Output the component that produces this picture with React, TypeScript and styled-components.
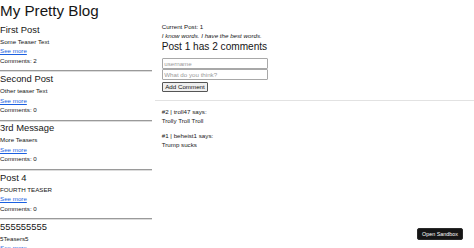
import React from "react";
import styled, { createGlobalStyle } from "styled-components";

const GlobalStyle = createGlobalStyle`
  html, body {
    margin: 0;
    padding: 0;
    background: #ffffff;
  }
  body {
    font-family: "Liberation Sans", Arial, Helvetica, sans-serif;
    color: #161616;
    font-size: 6.2px;
    overflow: hidden;
  }
  * { box-sizing: border-box; }
`;

const Page = styled.div`
  display: grid;
  grid-template-columns: 152px 1fr;
  column-gap: 3px;
  width: 474px;
  height: 248px;
  overflow: hidden;
`;

const LeftColumn = styled.div`
  display: flex;
  flex-direction: column;
`;

const BlogTitle = styled.h1`
  margin: 2.2px 0 4.6px 0;
  font-size: 15.2px;
  line-height: 17px;
  font-weight: 400;
  color: #161616;
`;

const PostCard = styled.article`
  display: flex;
  flex-direction: column;
`;

const PostTitle = styled.h2`
  margin: 0 0 2px 0;
  font-size: 9.4px;
  line-height: 11px;
  font-weight: 400;
  color: #161616;
`;

const Line = styled.div`
  line-height: 9.4px;
  font-size: 6.2px;
`;

const MoreLink = styled.a`
  line-height: 9.4px;
  font-size: 6.2px;
  color: #1a5fe0;
  text-decoration: underline;
  cursor: pointer;
`;

const Divider = styled.hr`
  margin: 5.3px 0 0.8px 0;
  height: 0;
  border: none;
  border-top: 1px solid #9a9a9a;
  border-bottom: 1px solid #dcdcdc;
`;

const RightColumn = styled.div`
  display: flex;
  flex-direction: column;
`;

const FormSection = styled.section`
  display: flex;
  flex-direction: column;
  align-items: flex-start;
  padding: 21.5px 0 8px 6.7px;
  border-bottom: 1px solid #e2e2e2;
`;

const InfoLine = styled.div`
  line-height: 9.5px;
`;

const Quote = styled.div`
  margin-top: 0.3px;
  line-height: 9.5px;
  font-style: italic;
`;

const CommentsHeading = styled.h2`
  margin: 0 0 5.2px 0;
  font-size: 10.1px;
  line-height: 11.6px;
  font-weight: 400;
  color: #161616;
`;

const TextInput = styled.input`
  width: 106.5px;
  height: 11px;
  margin: 0;
  padding: 0 1.5px;
  font-family: "Liberation Sans", Arial, sans-serif;
  font-size: 6.2px;
  color: #222;
  border: 1px solid #a8a8a8;
  border-radius: 1px;
  background: #fff;
  outline: none;
  &::placeholder {
    color: #9a9a9a;
  }
`;

const SubmitButton = styled.button`
  margin-top: 2px;
  height: 10px;
  padding: 0 2.5px;
  font-family: "Liberation Sans", Arial, sans-serif;
  font-size: 6.2px;
  line-height: 8px;
  color: #111;
  background: #efefef;
  border: 1px solid #555;
  border-radius: 1px;
`;

const CommentList = styled.div`
  display: flex;
  flex-direction: column;
  gap: 5.6px;
  padding: 6.2px 0 0 6.7px;
`;

const Comment = styled.div`
  display: flex;
  flex-direction: column;
  line-height: 9.3px;
`;

const SandboxButton = styled.button`
  position: fixed;
  right: 11px;
  bottom: 8px;
  height: 12px;
  padding: 0 4px;
  font-family: "Liberation Sans", Arial, sans-serif;
  font-size: 5.4px;
  color: #ffffff;
  background: #151515;
  border: 1px solid #2a2a2a;
  border-radius: 2px;
`;

const posts = [
  { title: "First Post", teaser: "Some Teaser Text", comments: 2 },
  { title: "Second Post", teaser: "Other teaser Text", comments: 0 },
  { title: "3rd Message", teaser: "More Teasers", comments: 0 },
  { title: "Post 4", teaser: "FOURTH TEASER", comments: 0 },
  { title: "555555555", teaser: "5Teasers5", comments: 0 },
];

const comments = [
  { id: 2, user: "troll47", text: "Trolly Troll Troll" },
  { id: 1, user: "beheist1", text: "Trump sucks" },
];

export default function App() {
  return (
    <>
      <GlobalStyle />
      <Page>
        <LeftColumn>
          <BlogTitle>My Pretty Blog</BlogTitle>
          {posts.map((p, i) => (
            <PostCard key={i}>
              <PostTitle>{p.title}</PostTitle>
              <Line>{p.teaser}</Line>
              <MoreLink>See more</MoreLink>
              <Line>Comments: {p.comments}</Line>
              <Divider />
            </PostCard>
          ))}
        </LeftColumn>
        <RightColumn>
          <FormSection>
            <InfoLine>Current Post: 1</InfoLine>
            <Quote>I know words. I have the best words.</Quote>
            <CommentsHeading>Post 1 has 2 comments</CommentsHeading>
            <TextInput placeholder="username" />
            <TextInput placeholder="What do you think?" />
            <SubmitButton>Add Comment</SubmitButton>
          </FormSection>
          <CommentList>
            {comments.map((c) => (
              <Comment key={c.id}>
                <span>
                  #{c.id} | {c.user} says:
                </span>
                <span>{c.text}</span>
              </Comment>
            ))}
          </CommentList>
        </RightColumn>
      </Page>
      <SandboxButton>Open Sandbox</SandboxButton>
    </>
  );
}
